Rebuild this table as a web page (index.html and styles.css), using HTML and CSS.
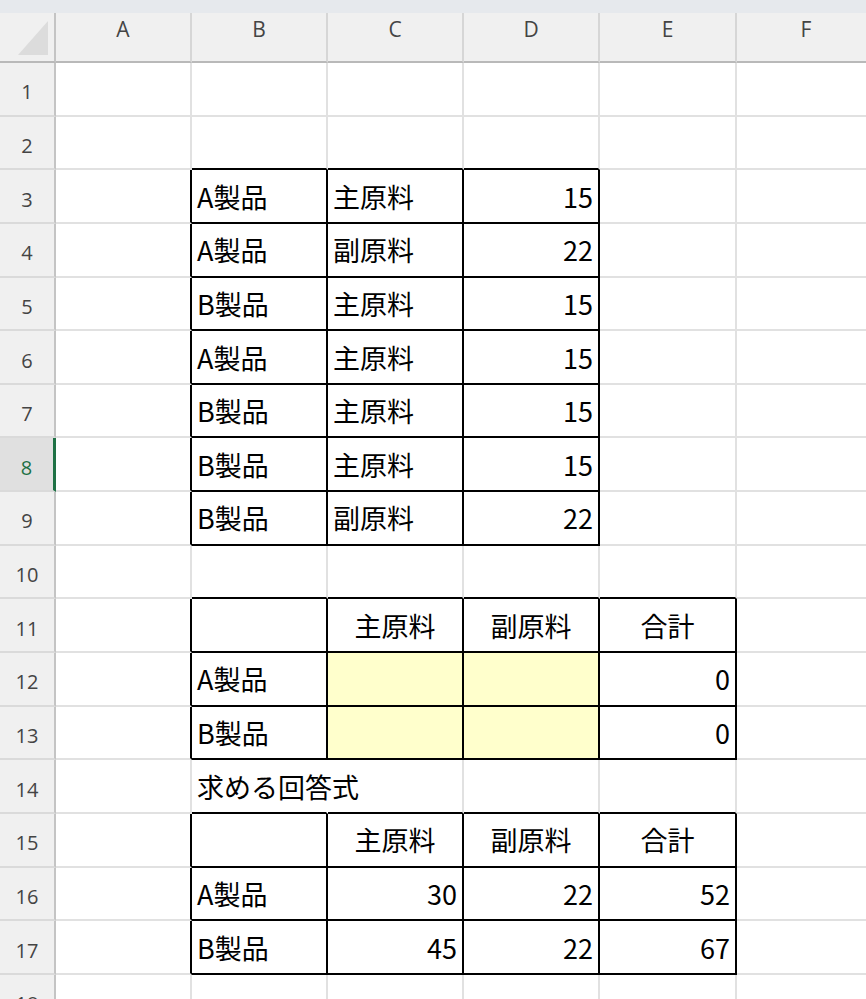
FILE: index.html
```html
<!DOCTYPE html>
<html lang="ja">
<head>
<meta charset="utf-8">
<title>Sheet</title>
<link rel="stylesheet" href="styles.css">
</head>
<body>
<div class="top"></div>
<div class="sheet">
  <div class="c ch corner"><svg class="tri" width="30" height="34" viewBox="0 0 30 34"><polygon points="0,34 30,0 30,34" fill="#dcdcdc"/></svg></div>
  <div class="c ch">A</div><div class="c ch">B</div><div class="c ch">C</div><div class="c ch">D</div><div class="c ch">E</div><div class="c ch">F</div>

  <div class="c rh">1</div><div class="c"></div><div class="c"></div><div class="c"></div><div class="c"></div><div class="c"></div><div class="c"></div>
  <div class="c rh">2</div><div class="c"></div><div class="c bb"></div><div class="c bb"></div><div class="c bb"></div><div class="c"></div><div class="c"></div>
  <div class="c rh">3</div><div class="c br"></div><div class="c t">A製品</div><div class="c t">主原料</div><div class="c t r">15</div><div class="c"></div><div class="c"></div>
  <div class="c rh">4</div><div class="c br"></div><div class="c t">A製品</div><div class="c t">副原料</div><div class="c t r">22</div><div class="c"></div><div class="c"></div>
  <div class="c rh">5</div><div class="c br"></div><div class="c t">B製品</div><div class="c t">主原料</div><div class="c t r">15</div><div class="c"></div><div class="c"></div>
  <div class="c rh">6</div><div class="c br"></div><div class="c t">A製品</div><div class="c t">主原料</div><div class="c t r">15</div><div class="c"></div><div class="c"></div>
  <div class="c rh">7</div><div class="c br"></div><div class="c t">B製品</div><div class="c t">主原料</div><div class="c t r">15</div><div class="c"></div><div class="c"></div>
  <div class="c rh sel">8</div><div class="c br"></div><div class="c t">B製品</div><div class="c t">主原料</div><div class="c t r">15</div><div class="c"></div><div class="c"></div>
  <div class="c rh">9</div><div class="c br"></div><div class="c t">B製品</div><div class="c t">副原料</div><div class="c t r">22</div><div class="c"></div><div class="c"></div>
  <div class="c rh">10</div><div class="c"></div><div class="c bb"></div><div class="c bb"></div><div class="c bb"></div><div class="c bb"></div><div class="c"></div>
  <div class="c rh">11</div><div class="c br"></div><div class="c t"></div><div class="c t m">主原料</div><div class="c t m">副原料</div><div class="c t m">合計</div><div class="c"></div>
  <div class="c rh">12</div><div class="c br"></div><div class="c t">A製品</div><div class="c t y"></div><div class="c t y"></div><div class="c t r">0</div><div class="c"></div>
  <div class="c rh">13</div><div class="c br"></div><div class="c t">B製品</div><div class="c t y"></div><div class="c t y"></div><div class="c t r">0</div><div class="c"></div>
  <div class="c rh">14</div><div class="c"></div><div class="c bb ov">求める回答式</div><div class="c bb"></div><div class="c bb"></div><div class="c bb"></div><div class="c"></div>
  <div class="c rh">15</div><div class="c br"></div><div class="c t"></div><div class="c t m">主原料</div><div class="c t m">副原料</div><div class="c t m">合計</div><div class="c"></div>
  <div class="c rh">16</div><div class="c br"></div><div class="c t">A製品</div><div class="c t r">30</div><div class="c t r">22</div><div class="c t r">52</div><div class="c"></div>
  <div class="c rh">17</div><div class="c br"></div><div class="c t">B製品</div><div class="c t r">45</div><div class="c t r">22</div><div class="c t r">67</div><div class="c"></div>
  <div class="c rh">18</div><div class="c"></div><div class="c"></div><div class="c"></div><div class="c"></div><div class="c"></div><div class="c"></div>
</div>
</body>
</html>
```

FILE: styles.css
```css
html, body {
  margin: 0;
  padding: 0;
  background: #ffffff;
  overflow: hidden;
}

.top {
  height: 13px;
  background: #e6e9ed;
}

.sheet {
  display: grid;
  grid-template-columns: 56px 136px 136px 136px 136px 137px 140px;
  grid-template-rows: 50px repeat(18, 53.65px);
  width: 877px;
}

.c {
  box-sizing: border-box;
  min-width: 0;
  display: flex;
  align-items: center;
  padding: 0 5px;
  border-right: 2px solid #e1e1e1;
  border-bottom: 2px solid #e1e1e1;
  font-family: "Noto Sans CJK JP", "Noto Sans", sans-serif;
  font-size: 27px;
  color: #000000;
  white-space: nowrap;
}

.ch {
  background: #f0f0f0;
  border-right-color: #d6d6d6;
  border-bottom-color: #b9b9b9;
  justify-content: center;
  font-family: "Open Sans", "Noto Sans", sans-serif;
  font-size: 21px;
  color: #444444;
  padding: 0 0 16px;
}

.corner {
  position: relative;
  border-right-color: #c4c4c4;
}

.tri {
  position: absolute;
  right: 6px;
  bottom: 6px;
}

.rh {
  background: #f0f0f0;
  border-right-color: #c4c4c4;
  border-bottom-color: #dadada;
  justify-content: center;
  font-family: "Open Sans", "Noto Sans", sans-serif;
  font-size: 20px;
  color: #444444;
  padding: 6px 0 0;
}

.sel {
  background: #e0e0e0;
  color: #1e7145;
  border-right: 3px solid #1e7145;
}

.t {
  border-right-color: #000000;
  border-bottom-color: #000000;
}

.bb {
  border-bottom-color: #000000;
}

.br {
  border-right-color: #000000;
}

.r {
  justify-content: flex-end;
}

.m {
  justify-content: center;
}

.y {
  background: #ffffcc;
}

.ov {
  overflow: visible;
  border-right-color: transparent;
}
```
